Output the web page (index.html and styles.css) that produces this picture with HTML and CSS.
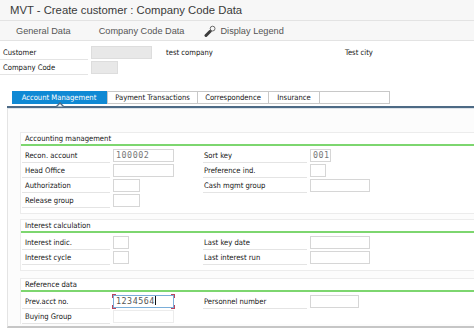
FILE: index.html
```html
<!DOCTYPE HTML>
<html>
  <head>
    <meta charset="UTF-8">
    <title>MVT - Create customer : Company Code Data</title>
    <link rel="stylesheet" href="styles.css">
  </head>
  <body>
    <div class="title">MVT - Create customer : Company Code Data</div>

    <div class="toolbar">
      <span class="tb-item">General Data</span>
      <span class="tb-item">Company Code Data</span>
      <span class="tb-item legend">
        <svg class="legend-icon" width="12" height="12" viewBox="0 0 12 12">
          <path d="M2 10.5 L6.2 6.3" stroke="#3c3c3c" stroke-width="3" stroke-linecap="round" fill="none"/>
          <circle cx="8.6" cy="3.6" r="2.4" stroke="#6a6a6a" stroke-width="1" fill="none"/>
          <path d="M7.2 6.5 L6.5 5.8" stroke="#6a6a6a" stroke-width="1"/>
        </svg>Display Legend
      </span>
    </div>

    <div class="head">
      <div class="hrow">
        <span class="hlabel">Customer</span>
        <span class="hfield w61"></span>
        <span class="htext company">test company</span>
        <span class="htext">Test city</span>
      </div>
      <div class="hrow">
        <span class="hlabel">Company Code</span>
        <span class="hfield w27"></span>
      </div>
    </div>

    <div class="tabs">
      <span class="tab active t1">Account Management</span>
      <span class="tab t2">Payment Transactions</span>
      <span class="tab t3">Correspondence</span>
      <span class="tab t4">Insurance</span>
      <span class="tab t5"></span>
    </div>
    <div class="tabline">
      <svg class="caret" width="8" height="5" viewBox="0 0 8 5">
        <polyline points="0.5,4.5 4,1 7.5,4.5" stroke="#4d6a85" stroke-width="1.4" fill="#fff"/>
      </svg>
    </div>

    <div class="panel">

      <div class="group">
        <div class="ghead">Accounting management</div>
        <div class="rows">
          <div class="row">
            <span class="lbl">Recon. account</span>
            <span class="cell"><span class="inp w61 val">100002</span></span>
            <span class="lbl right">Sort key</span>
            <span class="cell"><span class="inp w21 val">001</span></span>
          </div>
          <div class="row">
            <span class="lbl">Head Office</span>
            <span class="cell"><span class="inp w61"></span></span>
            <span class="lbl right">Preference ind.</span>
            <span class="cell"><span class="inp w16"></span></span>
          </div>
          <div class="row">
            <span class="lbl">Authorization</span>
            <span class="cell"><span class="inp w27"></span></span>
            <span class="lbl right">Cash mgmt group</span>
            <span class="cell"><span class="inp w60"></span></span>
          </div>
          <div class="row">
            <span class="lbl">Release group</span>
            <span class="cell"><span class="inp w27"></span></span>
          </div>
        </div>
      </div>

      <div class="group g2">
        <div class="ghead">Interest calculation</div>
        <div class="rows">
          <div class="row">
            <span class="lbl">Interest indic.</span>
            <span class="cell"><span class="inp w16"></span></span>
            <span class="lbl right">Last key date</span>
            <span class="cell"><span class="inp w60"></span></span>
          </div>
          <div class="row">
            <span class="lbl">Interest cycle</span>
            <span class="cell"><span class="inp w16"></span></span>
            <span class="lbl right">Last interest run</span>
            <span class="cell"><span class="inp w60"></span></span>
          </div>
        </div>
      </div>

      <div class="group last">
        <div class="ghead">Reference data</div>
        <div class="rows">
          <div class="row">
            <span class="lbl">Prev.acct no.</span>
            <span class="cell">
              <span class="inp w61 val focus">1234564<span class="cursor"></span>
                <span class="corner tl"></span><span class="corner tr"></span>
                <span class="corner bl"></span><span class="corner br"></span>
              </span>
            </span>
            <span class="lbl right">Personnel number</span>
            <span class="cell"><span class="inp w49"></span></span>
          </div>
          <div class="row">
            <span class="lbl">Buying Group</span>
            <span class="cell"><span class="inp w61 faint"></span></span>
          </div>
        </div>
      </div>

    </div>
  </body>
</html>
```

FILE: styles.css
```css
* {
  box-sizing: border-box;
}

body {
  margin: 0;
  width: 474px;
  height: 331px;
  overflow: hidden;
  background: #ffffff;
  font-family: "DejaVu Sans Condensed", "DejaVu Sans", sans-serif;
  font-size: 7.6px;
  color: #151515;
}

/* title + toolbar */
.title {
  height: 21px;
  line-height: 20px;
  padding-left: 10px;
  font-family: "Liberation Sans", Arial, sans-serif;
  font-size: 11.3px;
  color: #3a3a3a;
  background: #f7f7f7;
  border-bottom: 1px solid #e3e3e3;
}

.toolbar {
  display: flex;
  align-items: center;
  height: 20px;
  padding-left: 16px;
  font-family: "Liberation Sans", Arial, sans-serif;
  font-size: 9.2px;
  color: #555555;
  background: #f7f7f7;
  border-bottom: 1px solid #e3e3e3;
}

.tb-item {
  margin-right: 28px;
}

.tb-item.legend {
  display: flex;
  align-items: center;
  margin-left: -8px;
}

.legend-icon {
  margin-right: 4px;
}

/* header fields */
.head {
  padding-top: 4px;
}

.hrow {
  display: flex;
  align-items: center;
  height: 15px;
}

.hlabel {
  width: 88px;
  height: 14px;
  line-height: 14px;
  padding-left: 3px;
  border-bottom: 1px solid #e4e4e4;
}

.hfield {
  height: 13px;
  margin-left: 3px;
  background: #e8e8e8;
  border: 1px solid #dddddd;
}

.htext.company {
  width: 179px;
  margin-left: 14px;
}

/* tabs */
.tabs {
  display: flex;
  height: 13px;
  margin-top: 16px;
  margin-left: 12px;
}

.tab {
  height: 13px;
  line-height: 11px;
  text-align: center;
  background: #ffffff;
  border: 1px solid #c8c8c8;
  border-left: none;
}

.tab.active {
  background: #0f89d4;
  border-color: #0f89d4;
  color: #ffffff;
}

.t1 { width: 95px; }
.t2 { width: 91px; border-left: 1px solid #c8c8c8; }
.t3 { width: 71px; }
.t4 { width: 51px; }
.t5 { width: 70px; }

.tabline {
  position: relative;
  height: 2px;
  margin-top: 2px;
  margin-left: 7px;
  background: #4d6a85;
  box-shadow: 0 1px 0 #dde3e9;
}

.caret {
  position: absolute;
  left: 49px;
  top: -4px;
}

/* main panel */
.panel {
  height: 220px;
  margin-left: 7px;
  padding-top: 24px;
  padding-left: 12px;
  overflow: hidden;
  background: #fcfcfc;
  border-left: 1px solid #e4e4e4;
  border-bottom: 2px solid #c6c6c6;
}

.group {
  width: 470px;
  padding-left: 1px;
  padding-bottom: 5px;
  margin-bottom: 5px;
  background: #ffffff;
  border: 1px solid #ececec;
  border-right: none;
}

.group.g2 {
  margin-bottom: 7px;
}

.group.last {
  padding-bottom: 0;
  border-bottom: none;
}

.ghead {
  height: 13px;
  line-height: 11px;
  padding-left: 4px;
  margin-left: -1px;
  border-bottom: 2px solid #7dd66f;
}

.rows {
  padding-top: 2px;
}

.row {
  display: grid;
  grid-template-columns: 88px 87px 104px 1fr;
  column-gap: 3px;
  align-items: center;
  height: 15px;
}

.lbl {
  height: 14px;
  line-height: 14px;
  padding-left: 3px;
  border-bottom: 1px solid #e4e4e4;
}

.lbl.right {
  padding-left: 1px;
}

.cell {
  display: flex;
}

.inp {
  display: block;
  height: 13px;
  background: #ffffff;
  border: 1px solid #d6d6d6;
}

.inp.faint {
  border-color: #ececec;
}

.val {
  padding-left: 2px;
  line-height: 11px;
  font-family: "DejaVu Sans Mono", monospace;
  font-size: 8.4px;
  letter-spacing: 0.5px;
  color: #777777;
}

.w16 { width: 16px; }
.w21 { width: 21px; }
.w27 { width: 27px; }
.w49 { width: 49px; }
.w60 { width: 60px; }
.w61 { width: 61px; }

/* focused field */
.focus {
  position: relative;
  border-color: #7aaed9;
  color: #555555;
}

.cursor {
  display: inline-block;
  width: 1px;
  height: 9px;
  vertical-align: -1px;
  background: #111111;
}

.corner {
  position: absolute;
  width: 4px;
  height: 4px;
  border-color: #b8455e;
  border-style: solid;
  border-width: 0;
}

.corner.tl { left: -2px; top: -2px; border-left-width: 1px; border-top-width: 1px; }
.corner.tr { right: -2px; top: -2px; border-right-width: 1px; border-top-width: 1px; }
.corner.bl { left: -2px; bottom: -2px; border-left-width: 1px; border-bottom-width: 1px; }
.corner.br { right: -2px; bottom: -2px; border-right-width: 1px; border-bottom-width: 1px; }
```
